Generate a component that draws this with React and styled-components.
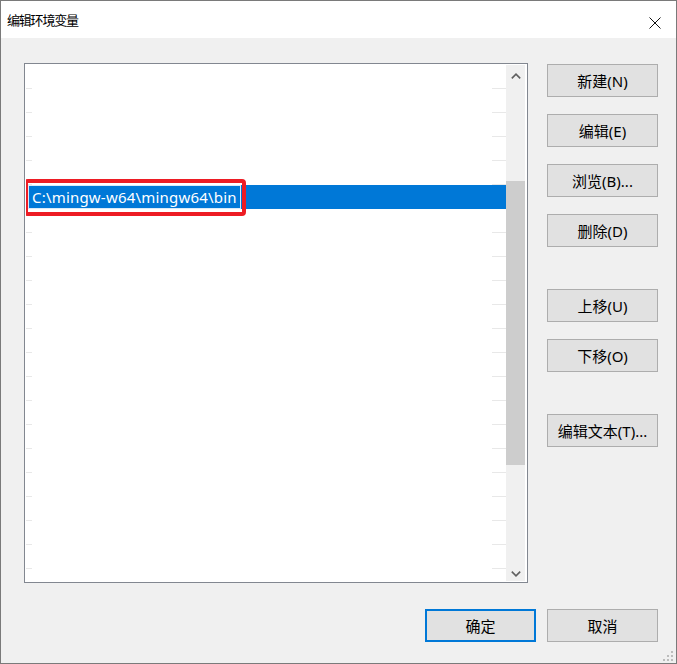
import React from "react";
import styled, { createGlobalStyle } from "styled-components";

const Global = createGlobalStyle`
  html, body { margin: 0; padding: 0; background: #ffffff; }
  body { font-family: "Noto Sans", "Noto Sans CJK SC", sans-serif; }
  * { box-sizing: border-box; }
`;

const Window = styled.div`
  position: relative;
  width: 677px;
  height: 664px;
  border: 1px solid #7a7a7a;
  background: #f0f0f0;
  display: flex;
  flex-direction: column;
`;

const TitleBar = styled.div`
  height: 37px;
  flex: none;
  background: #ffffff;
  display: flex;
  align-items: center;
  justify-content: space-between;
  padding: 0 15px 0 6px;
`;

const Title = styled.div`
  font-family: "Noto Sans CJK SC", sans-serif;
  font-size: 13px;
  letter-spacing: -1.2px;
  color: #000;
  margin-top: -1px;
`;

const CloseIcon = styled.svg`
  display: block;
  margin-top: 7px;
`;

const Body = styled.div`
  flex: 1;
  display: flex;
  flex-direction: column;
  padding: 25px 18px 0 23px;
`;

const Main = styled.div`
  display: flex;
  align-items: flex-start;
`;

const ListBox = styled.div`
  width: 504px;
  height: 520px;
  border: 1px solid #828790;
  background: #ffffff;
  padding: 1px 2px 1px 1px;
  display: flex;
`;

const Rows = styled.div`
  width: 480px;
  flex: none;
  display: flex;
  flex-direction: column;
  overflow: hidden;
`;

const Row = styled.div`
  position: relative;
  flex: none;
  height: 24px;
  display: flex;
  align-items: stretch;
  padding-left: 2px;
  background: ${(p) =>
    p.$selected
      ? "#0078d7"
      : `linear-gradient(#e8e8e8, #e8e8e8) left 0 bottom 0 / 6px 1px no-repeat,
         linear-gradient(#e8e8e8, #e8e8e8) right 0 bottom 0 / 14px 1px no-repeat`};
`;

const EditField = styled.div`
  display: flex;
  align-items: center;
  border: 1px solid rgba(255, 255, 255, 0.85);
  padding: 0 3px;
  color: #ffffff;
  font-family: "Noto Sans", "Noto Sans CJK SC", sans-serif;
  font-size: 15px;
  letter-spacing: 0.2px;
  white-space: nowrap;
`;

const Highlight = styled.div`
  position: absolute;
  left: -2px;
  top: -6px;
  width: 222px;
  height: 37px;
  border: 4px solid #ed1c24;
  border-radius: 4px;
  pointer-events: none;
`;

const ScrollBar = styled.div`
  width: 19px;
  flex: none;
  background: #f0f0f0;
  display: flex;
  flex-direction: column;
`;

const ArrowButton = styled.div`
  height: 17px;
  flex: none;
  display: flex;
  justify-content: center;
  align-items: center;
  padding-top: ${(p) => (p.$down ? "3px" : "4px")};
`;

const Track = styled.div`
  flex: 1;
  display: flex;
  flex-direction: column;
`;

const Thumb = styled.div`
  margin-top: ${(p) => p.$offset}px;
  height: ${(p) => p.$size}px;
  background: #cdcdcd;
`;

const ButtonColumn = styled.div`
  margin-left: 19px;
  margin-top: 1px;
  display: flex;
  flex-direction: column;
`;

const Button = styled.button`
  width: 111px;
  height: 33px;
  margin: 0;
  margin-top: ${(p) => p.$gap || 0}px;
  padding: 0;
  background: #e1e1e1;
  border: ${(p) => (p.$default ? "2px solid #0078d7" : "1px solid #adadad")};
  font-family: "Noto Sans", "Noto Sans CJK SC", sans-serif;
  font-size: 15px;
  color: #000;
  display: flex;
  align-items: center;
  justify-content: center;
  cursor: default;
`;

const Footer = styled.div`
  margin-top: 26px;
  display: flex;
  justify-content: flex-end;
  gap: 11px;
`;

const Grip = styled.svg`
  position: absolute;
  right: 2px;
  bottom: 1px;
`;

const sideButtons = [
  { label: "新建(N)", gap: 0 },
  { label: "编辑(E)", gap: 17 },
  { label: "浏览(B)...", gap: 17 },
  { label: "删除(D)", gap: 17 },
  { label: "上移(U)", gap: 42 },
  { label: "下移(O)", gap: 17 },
  { label: "编辑文本(T)...", gap: 42 },
];

export default function App() {
  const rows = Array.from({ length: 22 }, (_, i) => i);
  return (
    <>
      <Global />
      <Window>
        <TitleBar>
          <Title>编辑环境变量</Title>
          <CloseIcon width="12" height="12" viewBox="0 0 12 12">
            <path d="M0.5 0.5 L11.5 11.5 M11.5 0.5 L0.5 11.5" stroke="#111" strokeWidth="1" fill="none" />
          </CloseIcon>
        </TitleBar>
        <Body>
          <Main>
            <ListBox>
              <Rows>
                {rows.map((i) =>
                  i === 5 ? (
                    <Row key={i} $selected>
                      <EditField>C:\mingw-w64\mingw64\bin</EditField>
                      <Highlight />
                    </Row>
                  ) : (
                    <Row key={i} />
                  )
                )}
              </Rows>
              <ScrollBar>
                <ArrowButton>
                  <svg width="10" height="6" viewBox="0 0 10 6">
                    <polyline points="0.8,5.4 5,1.2 9.2,5.4" fill="none" stroke="#606060" strokeWidth="1.6" />
                  </svg>
                </ArrowButton>
                <Track>
                  <Thumb $offset={99} $size={284} />
                </Track>
                <ArrowButton $down>
                  <svg width="10" height="6" viewBox="0 0 10 6">
                    <polyline points="0.8,0.6 5,4.8 9.2,0.6" fill="none" stroke="#606060" strokeWidth="1.6" />
                  </svg>
                </ArrowButton>
              </ScrollBar>
            </ListBox>
            <ButtonColumn>
              {sideButtons.map((b) => (
                <Button key={b.label} $gap={b.gap}>
                  {b.label}
                </Button>
              ))}
            </ButtonColumn>
          </Main>
          <Footer>
            <Button $default>确定</Button>
            <Button>取消</Button>
          </Footer>
        </Body>
        <Grip width="12" height="12" viewBox="0 0 12 12">
          <g fill="#bcbcbc">
            <rect x="9" y="1" width="2" height="2" />
            <rect x="5" y="5" width="2" height="2" />
            <rect x="9" y="5" width="2" height="2" />
            <rect x="1" y="9" width="2" height="2" />
            <rect x="5" y="9" width="2" height="2" />
            <rect x="9" y="9" width="2" height="2" />
          </g>
        </Grip>
      </Window>
    </>
  );
}
